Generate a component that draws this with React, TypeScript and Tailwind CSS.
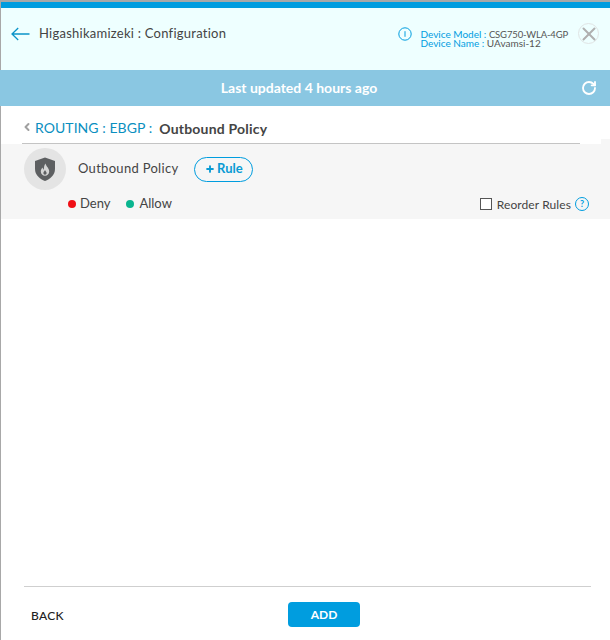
import { RotateCw, X, Plus, ChevronLeft } from "lucide-react";

export default function App() {
  return (
    <div className="w-[610px] h-[640px] bg-white relative overflow-hidden flex flex-col font-['Lato',sans-serif] text-[#3c3c3c]">
      <div className="absolute left-0 top-0 bottom-0 w-px bg-[#a8a8a8]" />
      <div className="absolute right-0 top-[139px] w-[9px] h-[5px] bg-[#f6f6f6]" />
      <div className="h-[2px] bg-[#a8a8a8] shrink-0" />
      <div className="h-[6px] bg-[#009ddf] shrink-0" />
      <header className="h-[62px] shrink-0 bg-[#eeffff] flex items-start pl-[11px] pr-[11px]">
        <svg viewBox="0 0 19 14" className="w-[19px] h-[14px] mt-[19px] text-[#0a94c9]" fill="none" stroke="currentColor" strokeWidth="1.3">
          <path d="M18.5 7H1M7.2 1 1 7l6.2 6" />
        </svg>
        <div className="ml-[9px] mt-[17px] text-[13px] leading-[16px] tracking-[0.25px] text-[#444]">Higashikamizeki : Configuration</div>
        <div className="ml-auto flex items-start">
          <svg viewBox="0 0 14 14" className="w-[14px] h-[14px] mt-[19px] text-[#009ddf]" fill="none" stroke="currentColor">
            <circle cx="7" cy="7" r="6.2" strokeWidth="1" />
            <path d="M7 4.2v5.6" strokeWidth="1" />
          </svg>
          <div className="ml-[8px] mt-[22px] text-[10px] leading-[9px] whitespace-nowrap">
            <div className="h-[9px]"><span className="text-[#009ddf]">Device Model : </span><span className="text-[#555] text-[9.5px] tracking-[-0.15px]">CSG750-WLA-4GP</span></div>
            <div className="h-[9px]"><span className="text-[#009ddf]">Device Name : </span><span className="text-[#555]">UAvamsi-12</span></div>
          </div>
          <div className="ml-[10px] mt-[15px] w-[21px] h-[21px] rounded-full border border-[#e0e4e4] flex items-center justify-center">
            <X className="w-[22px] h-[22px] shrink-0 text-[#b0b0b0]" strokeWidth={2.2} />
          </div>
        </div>
      </header>
      <div className="h-[36px] shrink-0 bg-[#8ac7e2] flex items-center justify-center relative pr-[12px] pb-[1px]">
        <span className="text-white font-bold text-[14px]">Last updated 4 hours ago</span>
        <RotateCw className="absolute right-[13px] top-[10px] w-[16px] h-[16px] text-white" strokeWidth={2.8} />
      </div>
      <div className="h-[38px] shrink-0 pl-[22px] pr-[30px]">
        <div className="h-[38px] border-b border-[#c4c4c4] flex items-center pt-[5px]">
          <ChevronLeft className="w-[12px] h-[12px] text-[#a0a0a0] -ml-[1px]" strokeWidth={4} />
          <span className="ml-[2px] text-[#0a8fbf] text-[14px] tracking-[0.05px]">ROUTING : EBGP :</span>
          <span className="ml-[7px] font-bold text-[14px] text-[#444] tracking-[0.2px] relative top-[1px]">Outbound Policy</span>
        </div>
      </div>
      <section className="h-[75px] shrink-0 bg-[#f6f6f6] ml-px flex flex-col">
        <div className="flex items-center h-[50px] pl-[23px]">
          <div className="w-[42px] h-[42px] rounded-full bg-[#e4e4e4] flex items-center justify-center">
            <svg viewBox="0 0 20 24" className="w-[20px] h-[24px]">
              <path d="M10 0.5 L20 4 V12 C20 18 15 22 10 24 C5 22 0 18 0 12 V4 Z" fill="#5d5f61" />
              <path d="M10.5 6.5c.6 3 3.7 4.4 3.7 8 0 2.4-1.9 4.2-4.2 4.2s-4.2-1.8-4.2-4.2c0-1.7.8-3 1.8-4 .1 1.1.6 1.8 1.3 2.2-.1-2.4.4-4.5 1.6-6.2z" fill="#d4d4d4" />
              <path d="M10 13c.4 1.2 1.6 1.7 1.6 3.1 0 1-.7 1.7-1.6 1.7s-1.6-.7-1.6-1.7c0-1.3 1.2-1.9 1.6-3.1z" fill="#5d5f61" />
            </svg>
          </div>
          <span className="ml-[12px] text-[13px] tracking-[0.3px] text-[#444]">Outbound Policy</span>
          <button className="ml-[16px] h-[25px] w-[59px] rounded-full border border-[#009ddf] flex items-center justify-center text-[#0a9bd4] text-[13px] font-bold">
            <Plus className="w-[10px] h-[10px] mr-[2px]" strokeWidth={4.5} />Rule
          </button>
        </div>
        <div className="flex items-center h-[20px] pl-[67px] pr-[21px] text-[13px] text-[#444]">
          <span className="w-[8px] h-[8px] rounded-full bg-[#f00f16]" />
          <span className="ml-[4px]">Deny</span>
          <span className="ml-[16px] w-[8px] h-[8px] rounded-full bg-[#0ab58f]" />
          <span className="ml-[5px]">Allow</span>
          <span className="ml-auto w-[12px] h-[12px] border border-[#555] bg-white" />
          <span className="ml-[5px] text-[12px] tracking-[0.1px] relative top-[1px]">Reorder Rules</span>
          <span className="ml-[4px] w-[14px] h-[14px] rounded-full border border-[#009ddf] text-[#009ddf] text-[9px] font-bold flex items-center justify-center">?</span>
        </div>
      </section>
      <div className="flex-1 min-h-0" />
      <footer className="h-[54px] shrink-0 ml-[24px] mr-[19px] border-t border-[#cfcfcf] relative flex items-start">
        <span className="ml-[7px] mt-[20px] text-[12px] font-medium tracking-[0.3px] text-[#222]">BACK</span>
        <button className="absolute left-[264px] top-[15px] w-[72px] h-[25px] rounded-[4px] bg-[#009ddf] text-white text-[12px] font-bold">ADD</button>
      </footer>
    </div>
  );
}
